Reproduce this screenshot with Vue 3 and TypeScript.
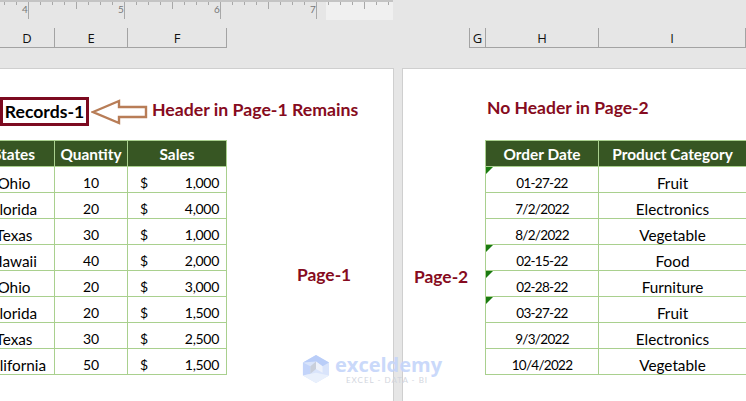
<script setup lang="ts">
const ticks: { x: number; h: number }[] = []
for (let i = 0; i < 42; i++) {
  const x = 4 + i * 12
  if (x > 392) break
  const m = (x - 28 + 96) % 96
  ticks.push({ x, h: m === 0 ? 17 : m === 48 ? 7 : 3 })
}
const nums = [{ n: 4, x: 22 }, { n: 5, x: 118 }, { n: 6, x: 214 }, { n: 7, x: 310 }]
const rowsA = [
  ['Ohio', '10', '1,000'], ['Florida', '20', '4,000'], ['Texas', '30', '1,000'], ['Hawaii', '40', '2,000'],
  ['Ohio', '20', '3,000'], ['Florida', '20', '1,500'], ['Texas', '30', '2,500'], ['California', '50', '1,500'],
]
const rowsB = [
  ['01-27-22', 'Fruit', true], ['7/2/2022', 'Electronics', false], ['8/2/2022', 'Vegetable', false], ['02-15-22', 'Food', true],
  ['02-28-22', 'Furniture', true], ['03-27-22', 'Fruit', true], ['9/3/2022', 'Electronics', false], ['10/4/2022', 'Vegetable', false],
] as const
</script>

<template>
  <div class="sheet">
    <div class="ruler">
      <div class="ruler-end"></div>
      <i v-for="t in ticks" :key="t.x" class="tick" :style="{ left: t.x + 'px', height: t.h + 'px' }"></i>
      <span v-for="n in nums" :key="n.n" class="num" :style="{ left: n.x + 'px' }">{{ n.n }}</span>
    </div>
    <div class="heads">
      <div class="hgroup first">
        <div class="hc" style="width: 55px">D</div>
        <div class="hc" style="width: 73px">E</div>
        <div class="hc" style="width: 99px">F</div>
      </div>
      <div class="hgroup second">
        <div class="hc" style="width: 16px">G</div>
        <div class="hc" style="width: 113px">H</div>
        <div class="hc" style="width: 147px">I</div>
      </div>
    </div>
    <div class="pages">
      <section class="page one">
        <div class="title-row">
          <div class="records">Records-1</div>
          <svg class="arrow" width="57" height="26" viewBox="0 0 57 26">
            <path d="M2 13 L28 2 V8 H55 V18 H28 V24 Z" fill="#fff" stroke="#b87d57" stroke-width="2.4" />
          </svg>
          <div class="note">Header in Page-1 Remains</div>
        </div>
        <div class="body-row">
          <table class="tbl a">
            <colgroup><col style="width: 81px" /><col style="width: 73px" /><col style="width: 99px" /></colgroup>
            <thead><tr><th>States</th><th>Quantity</th><th>Sales</th></tr></thead>
            <tbody>
              <tr v-for="(r, i) in rowsA" :key="i">
                <td class="c">{{ r[0] }}</td>
                <td class="c"><span class="digits">{{ r[1] }}</span></td>
                <td><div class="money digits"><span>$</span><span>{{ r[2] }}</span></div></td>
              </tr>
            </tbody>
          </table>
          <div class="plabel p1">Page-1</div>
        </div>
      </section>
      <section class="page two">
        <div class="note no">No Header in Page-2</div>
        <div class="body-row">
          <div class="plabel p2">Page-2</div>
          <table class="tbl b">
            <colgroup><col style="width: 113px" /><col style="width: 148px" /></colgroup>
            <thead><tr><th>Order Date</th><th>Product Category</th></tr></thead>
            <tbody>
              <tr v-for="(r, i) in rowsB" :key="i">
                <td class="c"><i v-if="r[2]" class="flag"></i><span class="digits date">{{ r[0] }}</span></td>
                <td class="c">{{ r[1] }}</td>
              </tr>
            </tbody>
          </table>
        </div>
      </section>
    </div>
    <div class="mark">
      <svg width="28" height="32" viewBox="0 0 30 32">
        <path d="M15 1 L29 9 V23 L15 31 L1 23 V9 Z" fill="#d9e4fb" />
        <path d="M15 1 L29 9 L22 13 L15 8 L1 9 Z" fill="#b9cdf8" />
        <path d="M1 9 L9 13 V21 L1 23 Z" fill="#c3d4fa" />
        <path d="M15 8 L22 13 V20 L15 16 Z" fill="#eef2fb" />
        <path d="M9 13 L15 8 V16 L9 21 Z" fill="#c9cfdb" />
        <path d="M1 23 L15 31 L29 23 L15 20 Z" fill="#e9f0fc" />
      </svg>
      <div class="mark-text">
        <div class="mark-big">exceldemy</div>
        <div class="mark-small">EXCEL - DATA - BI</div>
      </div>
    </div>
  </div>
</template>

<style>
html, body { margin: 0; overflow: hidden; }
</style>

<style scoped>
.sheet {
  position: relative;
  width: 746px;
  height: 401px;
  overflow: hidden;
  background: #e6e6e6;
  font-family: Lato, "Open Sans", sans-serif;
  color: #000;
}
.ruler {
  position: relative;
  height: 20px;
  border-top: 2px solid #c4c4c4;
  box-sizing: border-box;
  margin-bottom: 8px;
  width: 393px;
}
.tick { position: absolute; top: 0; width: 1px; background: #a8a8a8; }
.num { position: absolute; top: 1px; font-size: 10px; line-height: 13px; color: #777; }
.ruler-end {
  position: absolute;
  left: 326px;
  right: 0;
  top: 0;
  height: 18px;
  background: #f0f0f0;
}
.heads { display: flex; height: 20px; }
.hgroup { display: flex; border-bottom: 1px solid #a3a3a3; box-sizing: border-box; }
.hgroup.first { width: 227px; }
.hgroup.second { margin-left: 242px; width: 277px; border-left: 1px solid #a3a3a3; }
.hc {
  box-sizing: border-box;
  flex: none;
  border-right: 1px solid #a3a3a3;
  text-align: center;
  font-size: 13px;
  line-height: 20px;
  color: #111;
  font-family: "Open Sans", sans-serif;
}
.pages { display: flex; gap: 10px; margin-top: 21px; height: 332px; }
.page {
  background: #fff;
  box-shadow: 0 0 0 1px #cfcfcf;
  overflow: hidden;
  height: 340px;
}
.page.one { width: 393px; flex: none; }
.page.two { flex: 1; }
.title-row { display: flex; align-items: center; height: 29px; margin-top: 28px; }
.records {
  box-sizing: border-box;
  width: 89px;
  height: 29px;
  border: 3px solid #7c0a20;
  font-weight: 700;
  font-size: 17.6px;
  line-height: 23px;
  text-align: center;
  color: #000;
  white-space: nowrap;
}
.arrow { margin-left: 2px; flex: none; }
.note {
  margin: -4px 0 0 4px;
  color: #860b20;
  font-weight: 700;
  font-size: 17.7px;
  white-space: nowrap;
}
.note.no { margin: 29px 0 0 84px; height: 20px; line-height: 20px; font-size: 17.5px; }
.body-row { position: relative; margin-top: 14px; display: flex; }
.page.two .body-row { margin-top: 22px; }
.tbl {
  border-collapse: collapse;
  table-layout: fixed;
  font-size: 15.3px;
  flex: none;
}
.tbl.a { margin-left: -27px; width: 253px; }
.tbl.b { margin-left: 82px; width: 261px; }
.tbl th, .tbl td {
  border: 1px solid #a9d08e;
  height: 26px;
  padding: 0;
  box-sizing: border-box;
  white-space: nowrap;
  position: relative;
}
.tbl td { vertical-align: bottom; line-height: 18px; padding-bottom: 0; color: #000; }
.tbl th { background: #375623; color: #fff; font-weight: 700; font-size: 15.4px; }
.c { text-align: center; }
.digits { font-size: 14px; }
.date { font-size: 13.5px; letter-spacing: -0.7px; }
.money { display: flex; justify-content: space-between; padding: 0 7px 0 12px; letter-spacing: -0.3px; }
.flag {
  position: absolute;
  left: 0;
  top: 0;
  width: 0;
  height: 0;
  border-top: 7px solid #1a7a10;
  border-right: 7px solid transparent;
}
.plabel { color: #860b20; font-weight: 700; font-size: 17.4px; white-space: nowrap; }
.p1 { margin: 124px 0 0 70px; }
.p2 { position: absolute; left: 11px; top: 126px; }
.mark {
  position: absolute;
  left: 302px;
  top: 353px;
  display: flex;
  gap: 5px;
  pointer-events: none;
}
.mark-big { color: #c5d5fa; font-size: 20px; font-weight: 700; line-height: 22px; margin-top: 1px; font-family: "Open Sans", sans-serif; opacity: .9; }
.mark-small { color: #d2d6de; font-size: 8px; letter-spacing: 1px; line-height: 9px; margin-left: 11px; white-space: nowrap; }
</style>
